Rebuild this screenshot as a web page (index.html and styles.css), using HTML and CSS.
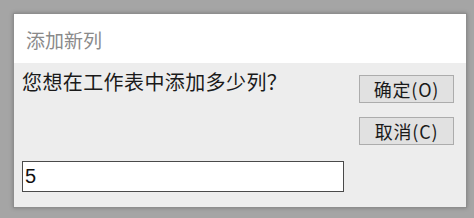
FILE: index.html
```html
<!DOCTYPE html>
<html lang="zh-CN">
<head>
    <meta charset="UTF-8">
    <title>添加新列</title>
    <link rel="stylesheet" href="styles.css">
</head>
<body>
    <div class="dialog">
        <div class="title">添加新列</div>
        <div class="content">
            <div class="main">
                <div class="question">您想在工作表中添加多少列？</div>
                <input class="count" type="text" value="5">
            </div>
            <div class="actions">
                <button class="btn">确定(O)</button>
                <button class="btn">取消(C)</button>
            </div>
        </div>
    </div>
</body>
</html>
```

FILE: styles.css
```css
body {
    margin: 0;
    background: #a5a5a5;
    font-family: "Noto Sans CJK SC", "Liberation Sans", sans-serif;
    width: 474px;
    height: 218px;
    overflow: hidden;
}

.dialog {
    margin: 13px 0 0 13px;
    width: 454px;
    height: 195px;
    box-sizing: border-box;
    border: 1px solid #8e8e8e;
    box-shadow: 0 0 4px rgba(0,0,0,0.25);
    background: #ededed;
    display: flex;
    flex-direction: column;
}

.title {
    height: 49px;
    background: #fff;
    color: #8a8a8a;
    font-size: 19px;
    line-height: 52px;
    padding-left: 12px;
}

.content {
    flex: 1;
    display: flex;
    padding: 8px 12px 15px 8px;
}

.main {
    flex: 1;
    display: flex;
    flex-direction: column;
}

.question {
    font-size: 20px;
    line-height: 22px;
    letter-spacing: 0.4px;
    color: #1a1a1a;
}

.count {
    margin-top: auto;
    width: 322px;
    height: 31px;
    box-sizing: border-box;
    border: 1px solid #4a4a4a;
    background: #fff;
    font-family: "Liberation Sans", sans-serif;
    font-size: 20px;
    padding: 0 2px;
    color: #111;
    outline: none;
}

.actions {
    display: flex;
    flex-direction: column;
    gap: 14px;
    margin-top: 4px;
    margin-left: 15px;
}

.btn {
    width: 95px;
    height: 28px;
    box-sizing: border-box;
    border: 1px solid #acacac;
    background: #e1e1e1;
    color: #1a1a1a;
    font-family: "Noto Sans CJK SC", sans-serif;
    font-size: 18px;
    line-height: 26px;
    letter-spacing: 0.8px;
    padding: 0;
}
```
